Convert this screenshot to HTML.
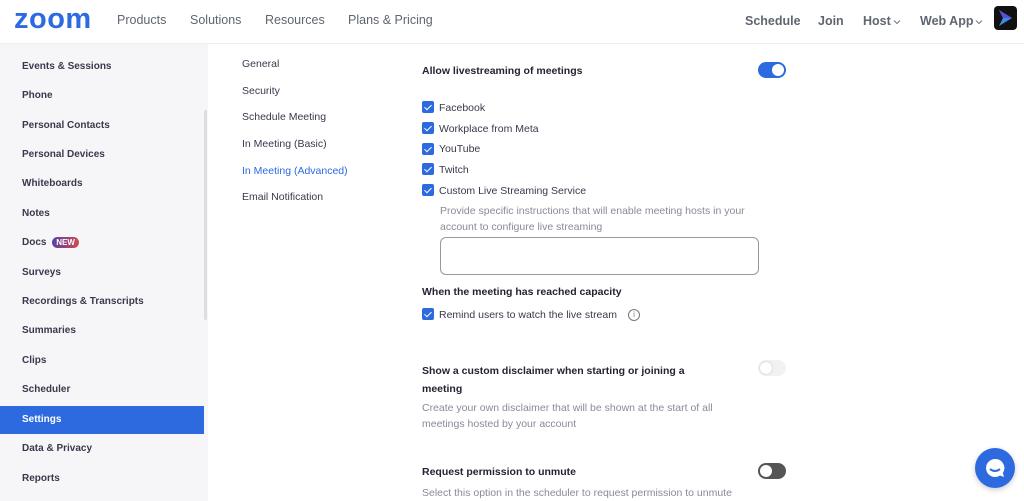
<!DOCTYPE html>
<html><head><meta charset="utf-8"><style>
*{margin:0;padding:0;box-sizing:border-box}
body{width:1024px;height:501px;overflow:hidden;background:#fff;font-family:"Liberation Sans",sans-serif;position:relative;color:#232333}
.a{position:absolute;white-space:nowrap}
.nav{font-size:12.5px;color:#5f6670}
.rn{font-size:12.5px;color:#5f6670;font-weight:bold}
.side{position:absolute;left:0;top:44px;width:208px;height:457px;background:#f6f6f8}
.si{position:absolute;left:22px;font-size:10px;font-weight:bold;color:#39394d}
.sub{position:absolute;left:242px;font-size:10.5px;color:#39394d}
.b{font-size:10.5px;font-weight:bold;color:#232333}
.t{font-size:10.5px;color:#39394d}
.g{font-size:10.5px;color:#8a8a99;line-height:16px}
.cb{position:absolute;left:422px;width:12px;height:12px;background:#2d6ae0;border-radius:2px}
.cb:after{content:"";position:absolute;left:4px;top:1.5px;width:3px;height:6px;border:solid #fff;border-width:0 1.5px 1.5px 0;transform:rotate(45deg)}
.tg{position:absolute;width:28px;height:16px;border-radius:8px}
.tg i{position:absolute;top:2px;width:12px;height:12px;border-radius:50%;background:#fff}
.ch{display:inline-block;vertical-align:middle;margin-left:2px}
</style></head><body>
<div class="a" style="left:14px;top:3px;font-size:29px;font-weight:bold;color:#2d6ae0;letter-spacing:0.5px">zoom</div>
<div class="a nav" style="left:117px;top:13px">Products</div>
<div class="a nav" style="left:190px;top:13px">Solutions</div>
<div class="a nav" style="left:265px;top:13px">Resources</div>
<div class="a nav" style="left:348px;top:13px">Plans &amp; Pricing</div>
<div class="a rn" style="left:745px;top:14px">Schedule</div>
<div class="a rn" style="left:818px;top:14px">Join</div>
<div class="a rn" style="left:863px;top:14px">Host<svg class="ch" width="8" height="6"><path d="M1 1.5L4 4.5 7 1.5" stroke="#777" fill="none"/></svg></div>
<div class="a rn" style="left:920px;top:14px">Web App<svg class="ch" width="8" height="6"><path d="M1 1.5L4 4.5 7 1.5" stroke="#777" fill="none"/></svg></div>
<div class="a" style="left:994px;top:6px;width:23px;height:24px;background:#111;border-radius:4px"><svg width="23" height="24"><path d="M5 4 L18 12 L5 20 L9 12 Z" fill="#3c8be8"/><path d="M5 4 L18 12 L9 12 Z" fill="#5a50d0"/></svg></div>
<div class="a" style="left:0;top:43px;width:1024px;height:1px;background:#eee"></div>
<div class="side"></div>
<div class="a" style="left:204px;top:110px;width:3px;height:210px;background:#ddd;border-radius:2px"></div>
<div class="si" style="top:61px">Events &amp; Sessions</div>
<div class="si" style="top:90px">Phone</div>
<div class="si" style="top:120px">Personal Contacts</div>
<div class="si" style="top:149px">Personal Devices</div>
<div class="si" style="top:178px">Whiteboards</div>
<div class="si" style="top:208px">Notes</div>
<div class="si" style="top:237px">Docs <span style="display:inline-block;background:linear-gradient(90deg,#5a3ea8,#d04a4a);color:#fff;font-size:8px;padding:1px 4px;border-radius:7px;margin-left:3px">NEW</span></div>
<div class="si" style="top:267px">Surveys</div>
<div class="si" style="top:296px">Recordings &amp; Transcripts</div>
<div class="si" style="top:325px">Summaries</div>
<div class="si" style="top:355px">Clips</div>
<div class="si" style="top:384px">Scheduler</div>
<div class="a" style="left:0;top:406px;width:204px;height:28px;background:#2d6ae0"></div>
<div class="si" style="top:414px;color:#fff">Settings</div>
<div class="si" style="top:443px">Data &amp; Privacy</div>
<div class="si" style="top:473px">Reports</div>
<div class="sub" style="top:58px">General</div>
<div class="sub" style="top:85px">Security</div>
<div class="sub" style="top:111px">Schedule Meeting</div>
<div class="sub" style="top:138px">In Meeting (Basic)</div>
<div class="sub" style="top:165px;color:#2d6ae0">In Meeting (Advanced)</div>
<div class="sub" style="top:191px">Email Notification</div>
<div class="a b" style="left:422px;top:65px">Allow livestreaming of meetings</div>
<div class="tg" style="left:758px;top:62px;background:#2d6ae0"><i style="left:14px"></i></div>
<div class="cb" style="top:101px"></div><div class="a t" style="left:439px;top:102px">Facebook</div>
<div class="cb" style="top:122px"></div><div class="a t" style="left:439px;top:123px">Workplace from Meta</div>
<div class="cb" style="top:143px"></div><div class="a t" style="left:439px;top:143px">YouTube</div>
<div class="cb" style="top:163px"></div><div class="a t" style="left:439px;top:164px">Twitch</div>
<div class="cb" style="top:184px"></div><div class="a t" style="left:439px;top:185px">Custom Live Streaming Service</div>
<div class="a g" style="left:440px;top:203px">Provide specific instructions that will enable meeting hosts in your<br>account to configure live streaming</div>
<div class="a" style="left:440px;top:237px;width:319px;height:38px;border:1px solid #999;border-radius:6px"></div>
<div class="a b" style="left:422px;top:286px">When the meeting has reached capacity</div>
<div class="cb" style="top:308px"></div><div class="a t" style="left:439px;top:309px">Remind users to watch the live stream</div>
<div class="a" style="left:628px;top:309px;width:12px;height:12px;border:1px solid #777;border-radius:50%;font-size:8px;color:#777;text-align:center;line-height:10px">i</div>
<div class="a b" style="left:422px;top:362px;line-height:18px">Show a custom disclaimer when starting or joining a<br>meeting</div>
<div class="tg" style="left:758px;top:360px;background:#f2f2f4"><i style="left:2px;box-shadow:0 0 2px #bbb"></i></div>
<div class="a g" style="left:422px;top:400px">Create your own disclaimer that will be shown at the start of all<br>meetings hosted by your account</div>
<div class="a b" style="left:422px;top:466px">Request permission to unmute</div>
<div class="tg" style="left:758px;top:463px;background:#555"><i style="left:2px"></i></div>
<div class="a g" style="left:422px;top:485px">Select this option in the scheduler to request permission to unmute</div>
<div class="a" style="left:975px;top:448px;width:40px;height:40px;border-radius:50%;background:#2d6ae0;box-shadow:0 2px 6px rgba(0,0,0,.2)"><svg width="40" height="40"><path d="M20 11a9 9 0 1 0 5 16.5l4 1.5-1.2-4A9 9 0 0 0 20 11z" fill="#fff"/><path d="M15 21q5 4 10 0" stroke="#2d6ae0" stroke-width="2" fill="none"/></svg></div>
</body></html>
